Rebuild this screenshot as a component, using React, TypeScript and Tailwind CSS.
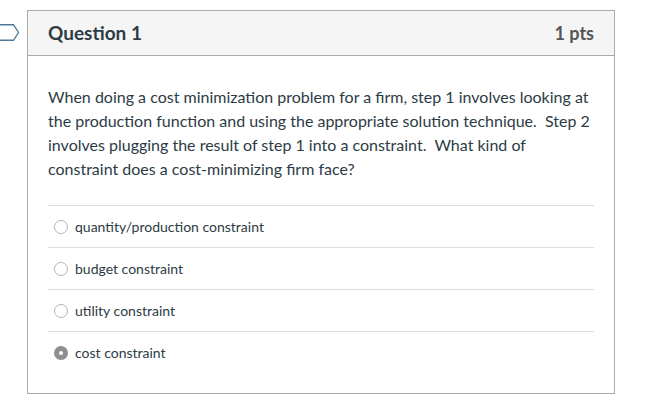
import React from 'react';

const answers = [
  { id: 'a1', label: 'quantity/production constraint', selected: false },
  { id: 'a2', label: 'budget constraint', selected: false },
  { id: 'a3', label: 'utility constraint', selected: false },
  { id: 'a4', label: 'cost constraint', selected: true },
];

const Radio = ({ checked }: { checked: boolean }) =>
  checked ? (
    <span className="w-[14px] h-[14px] rounded-full bg-[#8f8f8f] flex items-center justify-center shrink-0">
      <span className="w-[4px] h-[4px] rounded-full bg-white" />
    </span>
  ) : (
    <span className="w-[14px] h-[14px] rounded-full border border-[#b5b5b5] bg-white shrink-0" />
  );

export default function App() {
  return (
    <div
      className="w-[666px] h-[406px] bg-white relative text-[#2d3b45]"
      style={{ fontFamily: 'Lato, "Open Sans", sans-serif' }}
    >
      {/* question flag */}
      <svg className="absolute left-0 top-[24px]" width="20" height="17" viewBox="0 0 20 17">
        <path d="M-2 0.75 H13.5 L18.5 8.5 L13.5 16.25 H-2" fill="none" stroke="#4e7898" strokeWidth="1.3" />
      </svg>

      <div className="pt-[10px] pl-[27px]">
        <div className="w-[588px] h-[384px] border border-[#aaaaaa] flex flex-col">
          <div className="h-[45px] bg-[#f5f5f5] border-b border-[#aaaaaa] flex items-center justify-between pl-[20px] pr-[20px]">
            <span className="text-[19px] font-bold text-[#2d3b45]">Question 1</span>
            <span className="text-[18px] font-bold text-[#555555]">1 pts</span>
          </div>

          <div className="px-[20px] pt-[29px]">
            <p className="text-[16px] leading-[24px] text-[#2d3b45]">
              When doing a cost minimization problem for a firm, step 1 involves looking at the production function and using the appropriate solution technique.&nbsp; Step 2 involves plugging the result of step 1 into a constraint.&nbsp; What kind of constraint does a cost-minimizing firm face?
            </p>

            <div className="mt-[24px]">
              {answers.map((a) => (
                <div key={a.id} className="h-[42px] border-t border-[#dddddd] flex items-center pl-[6px] gap-[7px]">
                  <Radio checked={a.selected} />
                  <span className="text-[14px] text-[#2d3b45]">{a.label}</span>
                </div>
              ))}
            </div>
          </div>
        </div>
      </div>
    </div>
  );
}
